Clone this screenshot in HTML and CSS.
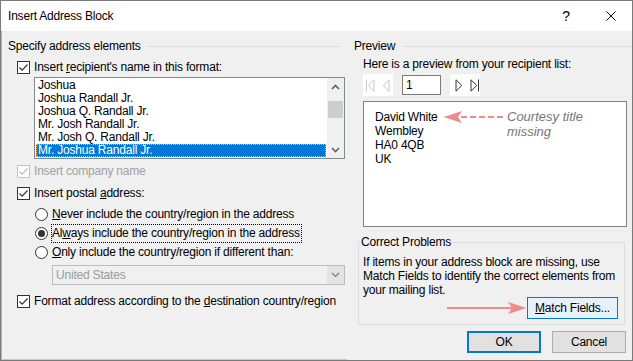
FILE: index.html
```html
<!DOCTYPE html>
<html>
<head>
<meta charset="utf-8">
<link rel="stylesheet" href="styles.css">
</head>
<body>
<div class="window">
  <div class="titlebar">
    <span class="title">Insert Address Block</span>
    <span class="help">?</span>
    <svg class="close" width="10" height="10" viewBox="0 0 10 10"><path d="M0.5 0.5 L9.5 9.5 M9.5 0.5 L0.5 9.5" stroke="#000" stroke-width="1" fill="none"/></svg>
  </div>
  <div class="content">
    <div class="left">
      <div class="legend-row"><span>Specify address elements</span></div>
      <div class="check-row first">
        <span class="cb"><svg width="11" height="11" viewBox="0 0 11 11"><path d="M1.5 5.5 L4.2 8.2 L9.5 2.5" stroke="#333" stroke-width="1.2" fill="none"/></svg></span>
        <span>Insert <u>r</u>ecipient's name in this format:</span>
      </div>
      <div class="listbox">
        <div class="items">
          <div class="item">Joshua</div>
          <div class="item">Joshua Randall Jr.</div>
          <div class="item">Joshua Q. Randall Jr.</div>
          <div class="item">Mr. Josh Randall Jr.</div>
          <div class="item">Mr. Josh Q. Randall Jr.</div>
          <div class="item selected">Mr. Joshua Randall Jr.</div>
        </div>
        <div class="scrollbar">
          <div class="sb-btn"><svg width="9" height="6" viewBox="0 0 9 6"><path d="M1 5 L4.5 1.5 L8 5" stroke="#606060" stroke-width="1.6" fill="none"/></svg></div>
          <div class="sb-track"><div class="sb-thumb"></div></div>
          <div class="sb-btn"><svg width="9" height="6" viewBox="0 0 9 6"><path d="M1 1 L4.5 4.5 L8 1" stroke="#606060" stroke-width="1.6" fill="none"/></svg></div>
        </div>
      </div>
      <div class="check-row company disabled">
        <span class="cb"><svg width="11" height="11" viewBox="0 0 11 11"><path d="M1.5 5.5 L4.2 8.2 L9.5 2.5" stroke="#bcbcbc" stroke-width="1.2" fill="none"/></svg></span>
        <span>Insert company name</span>
      </div>
      <div class="check-row postal">
        <span class="cb"><svg width="11" height="11" viewBox="0 0 11 11"><path d="M1.5 5.5 L4.2 8.2 L9.5 2.5" stroke="#333" stroke-width="1.2" fill="none"/></svg></span>
        <span>Insert postal <u>a</u>ddress:</span>
      </div>
      <div class="radios">
        <div class="radio-row"><span class="rb"></span><span class="rlabel"><u>N</u>ever include the country/region in the address</span></div>
        <div class="radio-row"><span class="rb on"><span class="dot"></span></span><span class="rlabel focus">Al<u>w</u>ays include the country/region in the address</span></div>
        <div class="radio-row"><span class="rb"></span><span class="rlabel"><u>O</u>nly include the country/region if different than:</span></div>
      </div>
      <div class="combo">
        <span class="combo-text">United States</span>
        <span class="combo-btn"><svg width="9" height="6" viewBox="0 0 9 6"><path d="M1 1 L4.5 4.5 L8 1" stroke="#7a7a7a" stroke-width="1.2" fill="none"/></svg></span>
      </div>
      <div class="check-row format">
        <span class="cb"><svg width="11" height="11" viewBox="0 0 11 11"><path d="M1.5 5.5 L4.2 8.2 L9.5 2.5" stroke="#333" stroke-width="1.2" fill="none"/></svg></span>
        <span>Format address according to the <u>d</u>estination country/region</span>
      </div>
    </div>
    <div class="right">
      <div class="legend-row"><span>Preview</span></div>
      <div class="hint">Here is a preview from your recipient list:</div>
      <div class="nav">
        <div class="nav-group">
          <svg width="9" height="13" viewBox="0 0 9 13"><path d="M0.5 0.5 V12.5 M8 0.8 L2.2 6.5 L8 12.2 Z" stroke="#c8c8c8" stroke-width="1" fill="none"/></svg>
          <svg class="gap" width="8" height="13" viewBox="0 0 8 13"><path d="M7 0.8 L1.2 6.5 L7 12.2 Z" stroke="#c8c8c8" stroke-width="1" fill="none"/></svg>
        </div>
        <div class="nav-input">1</div>
        <div class="nav-group next">
          <svg width="8" height="13" viewBox="0 0 8 13"><path d="M1 0.8 L6.8 6.5 L1 12.2 Z" stroke="#333" stroke-width="1" fill="none"/></svg>
          <svg class="gap" width="9" height="13" viewBox="0 0 9 13"><path d="M8.5 0.5 V12.5 M1 0.8 L6.8 6.5 L1 12.2 Z" stroke="#333" stroke-width="1" fill="none"/></svg>
        </div>
      </div>
      <div class="preview">
        <div class="address">
          <div>David White</div>
          <div>Wembley</div>
          <div>HA0 4QB</div>
          <div>UK</div>
        </div>
        <svg class="arrow1" width="60" height="14" viewBox="0 0 60 14">
          <path d="M18 7 H60" stroke="#f28a8a" stroke-width="2" stroke-dasharray="6 3" fill="none"/>
          <path d="M0.5 7 L19 1 L15 7 L19 13 Z" fill="#f28a8a"/>
        </svg>
        <div class="note">Courtesy title<br>missing</div>
      </div>
      <fieldset class="problems">
        <legend>Correct Problems</legend>
        <div class="problems-text">If items in your address block are missing, use<br>Match Fields to identify the correct elements from<br>your mailing list.</div>
        <div class="match-row">
          <svg width="80" height="14" viewBox="0 0 80 14">
            <path d="M0 7 H66" stroke="#f28a8a" stroke-width="2" fill="none"/>
            <path d="M79.5 7 L61 1 L65 7 L61 13 Z" fill="#f28a8a"/>
          </svg>
          <button class="btn match"><u>M</u>atch Fields...</button>
        </div>
      </fieldset>
      <div class="buttons">
        <button class="btn default">OK</button>
        <button class="btn">Cancel</button>
      </div>
    </div>
  </div>
</div>
</body>
</html>
```
FILE: styles.css
```css
* { box-sizing: border-box; }
body { margin: 0; background: #f0f0f0; }

.window {
  width: 633px;
  height: 361px;
  border: 1px solid #7a7a7a;
  background: #f0f0f0;
  display: flex;
  flex-direction: column;
  font-family: "Liberation Sans", Arial, sans-serif;
  font-size: 12px;
  line-height: 14px;
  letter-spacing: -0.2px;
  color: #000;
  overflow: hidden;
}

.titlebar {
  height: 30px;
  flex: none;
  background: #fff;
  display: flex;
  align-items: center;
  padding-left: 7px;
}
.title { flex: 1; }
.help { width: 14px; text-align: center; font-size: 14px; margin-right: 33px; }
.close { margin-right: 16px; }

.content { flex: 1; display: flex; }

.left {
  width: 346px;
  flex: none;
  padding-top: 8px;
  border-left: 1px solid #b4b4b4;
  border-bottom: 1px solid #c8c8c8;
}

.legend-row {
  display: flex;
  align-items: center;
  height: 14px;
  padding-left: 6px;
  margin-right: 7px;
  white-space: nowrap;
}
.legend-row::after {
  content: "";
  flex: 1;
  border-top: 1px solid #dcdcdc;
  margin-left: 6px;
}

.check-row {
  display: flex;
  align-items: center;
  height: 14px;
  margin-left: 15px;
  white-space: nowrap;
}
.check-row.first { margin-top: 7px; }
.check-row.company { margin-top: 5px; }
.check-row.postal { margin-top: 8px; }
.check-row.format { margin-top: 9px; }
.check-row.disabled { color: #a0a0a0; }

.cb {
  width: 13px;
  height: 13px;
  border: 1px solid #333;
  background: #fff;
  margin-right: 4px;
  display: flex;
  align-items: center;
  justify-content: center;
  flex: none;
}
.disabled .cb { border-color: #c4c4c4; }

.listbox {
  width: 311px;
  height: 82px;
  margin: 3px 0 0 32px;
  border: 1px solid #828790;
  background: #fff;
  display: flex;
}
.items { flex: 1; padding-top: 1px; }
.item { height: 13px; line-height: 13px; padding-left: 3px; white-space: nowrap; }
.item.selected {
  margin: 0 1px;
  background: #0078d7;
  color: #fff;
  border: 1px dotted #ffb35c;
  line-height: 11px;
  padding-left: 1px;
}

.scrollbar {
  width: 17px;
  background: #f0f0f0;
  display: flex;
  flex-direction: column;
}
.sb-btn { height: 17px; display: flex; align-items: center; justify-content: center; }
.sb-track { flex: 1; padding-top: 6px; }
.sb-thumb { height: 17px; margin: 0 1px; background: #cdcdcd; }

.radios { margin: 5px 0 0 33px; }
.radio-row { display: flex; align-items: center; height: 19px; white-space: nowrap; }
.rb {
  width: 13px;
  height: 13px;
  border: 1px solid #333;
  border-radius: 50%;
  background: #fff;
  margin-right: 3px;
  display: flex;
  align-items: center;
  justify-content: center;
  flex: none;
}
.dot { width: 7px; height: 7px; border-radius: 50%; background: #333; }
.rlabel { border: 1px solid transparent; line-height: 17px; padding-right: 1px; }
.rlabel.focus { border: 1px dotted #000; }

.combo {
  width: 293px;
  height: 20px;
  margin: 3px 0 0 50px;
  border: 1px solid #bcbcbc;
  background: #f0f0f0;
  display: flex;
}
.combo-text { flex: 1; padding-left: 3px; line-height: 18px; color: #9a9a9a; }
.combo-btn {
  width: 17px;
  background: #e3e3e3;
  display: flex;
  align-items: center;
  justify-content: center;
}

.right { flex: 1; padding-top: 8px; }
.right .legend-row { padding-left: 7px; margin-right: 0; }
.right .legend-row::after { margin-left: 8px; }

.hint { margin: 4px 0 0 16px; white-space: nowrap; }

.nav { display: flex; align-items: center; height: 22px; margin: 3px 0 0 16px; }
.nav-group {
  width: 30px;
  height: 22px;
  background: #fff;
  display: flex;
  align-items: center;
  padding-left: 3px;
}
.nav-group .gap { margin-left: 7px; }
.nav-group.next { padding-left: 5px; }
.nav-input {
  width: 39px;
  height: 20px;
  margin: 0 9px;
  border: 1px solid #7a7a7a;
  background: #fff;
  padding-left: 3px;
  line-height: 18px;
}

.preview {
  width: 264px;
  height: 126px;
  margin: 5px 0 0 16px;
  border: 1px solid #838383;
  background: #fff;
  padding: 8px 0 0 11px;
  display: flex;
  align-items: flex-start;
}
.address { width: 68px; flex: none; line-height: 14px; white-space: nowrap; }
.arrow1 { flex: none; }
.note {
  margin-left: 4px;
  font-size: 13px;
  font-style: italic;
  color: #767676;
  line-height: 15px;
  letter-spacing: 0;
  margin-top: -1px;
  white-space: nowrap;
}

.problems {
  width: 267px;
  margin: 8px 0 0 11px;
  padding: 0 6px 5px 4px;
  border: 1px solid #dcdcdc;
  min-width: 0;
}
.problems legend { padding: 0; margin-left: -2px; line-height: 14px; }
.problems-text { margin-top: 6px; line-height: 14px; white-space: nowrap; }
.match-row { display: flex; justify-content: flex-end; align-items: center; }

.btn {
  height: 22px;
  font-family: inherit;
  font-size: 12px;
  letter-spacing: -0.2px;
  color: #000;
  background: #e1e1e1;
  border: 1px solid #adadad;
  padding: 0;
  width: 74px;
}
.btn.match { width: 91px; background: #e5f1fb; border-color: #0078d7; }
.btn.default { border: 2px solid #0078d7; }

.buttons {
  display: flex;
  justify-content: flex-end;
  gap: 11px;
  margin-top: 6px;
  padding-right: 6px;
}
```
